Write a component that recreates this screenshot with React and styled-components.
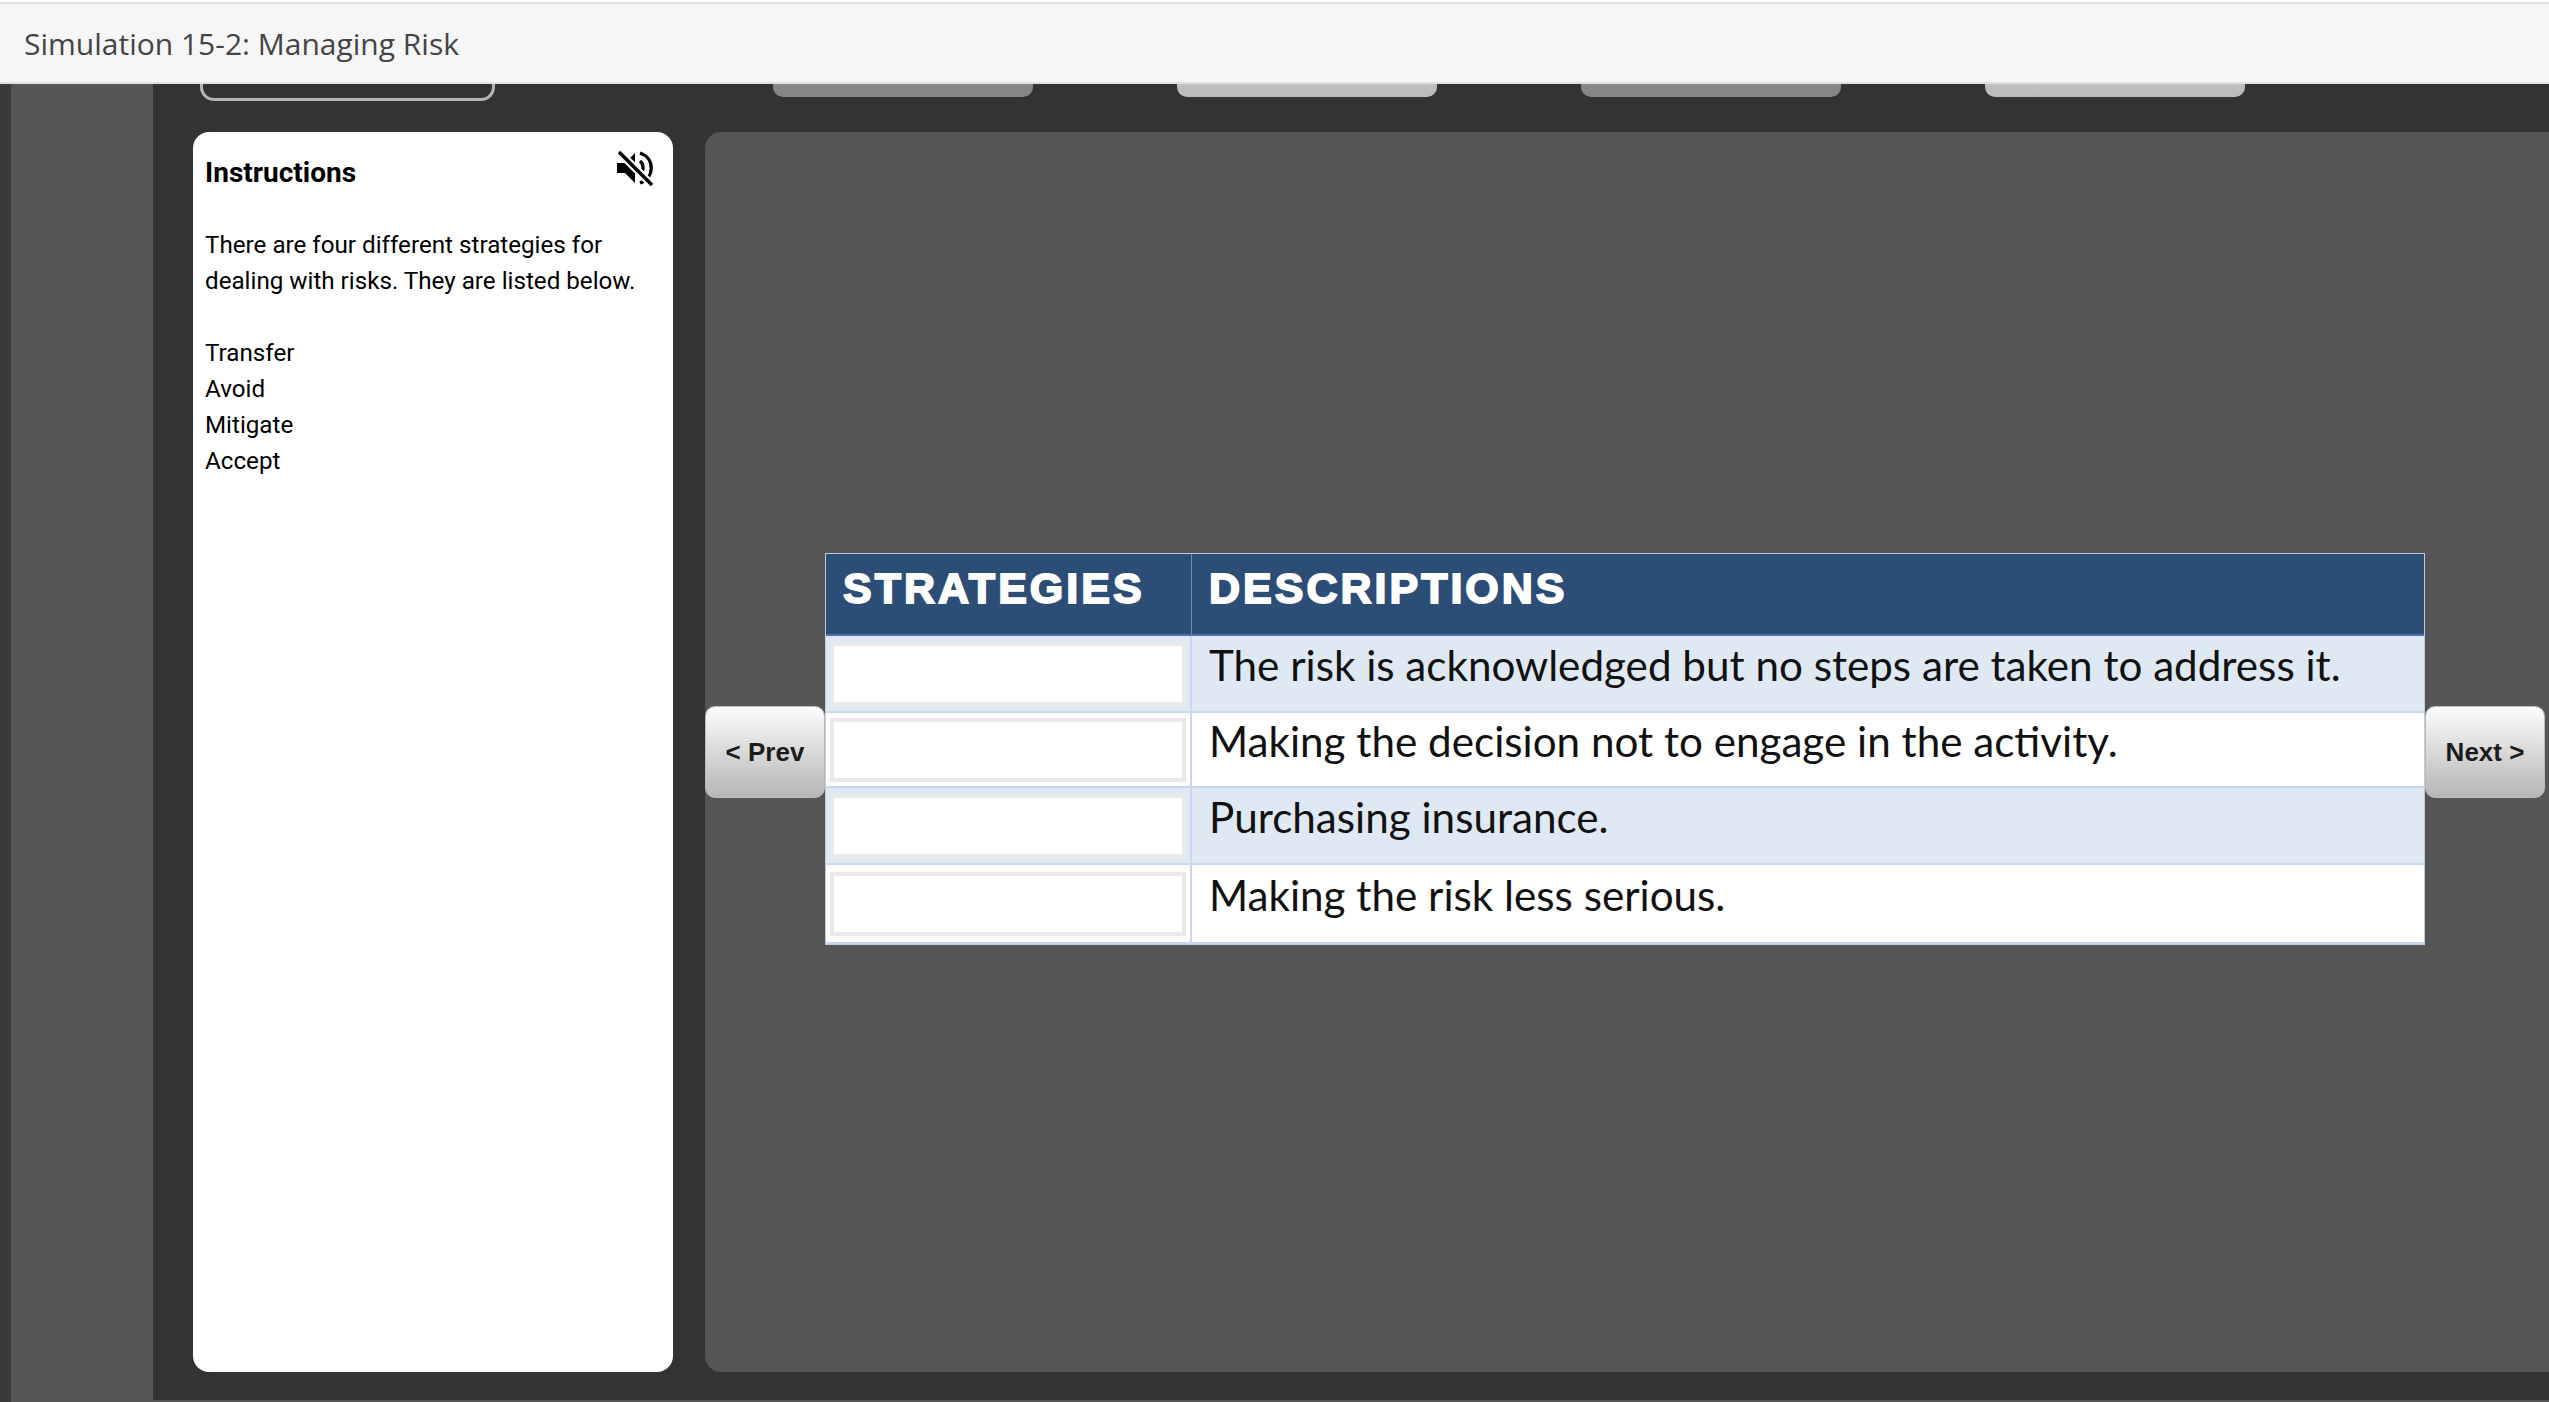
import React from 'react';
import styled, {createGlobalStyle} from 'styled-components';

const GlobalStyle = createGlobalStyle`
    html, body{
        margin:0;
        padding:0;
        height:100%;
        overflow:hidden;
        background:#555;
    }
    #root{
        height:100%;
    }
`

const Page = styled.div`
    display:flex;
    flex-direction:column;
    height:1402px;
    background:#fff;
`
const TitleBar = styled.header`
    flex:none;
    box-sizing:border-box;
    height:82px;
    margin-top:2px;
    padding-left:24px;
    display:flex;
    align-items:center;
    position:relative;
    z-index:2;
    background:#f6f6f6;
    border-top:2px solid #e0e0e0;
    border-bottom:2px solid #e0e0e0;
    font-family:"Open Sans", sans-serif;
    font-size:30px;
    color:#444;
`
const Body = styled.div`
    flex:1;
    display:flex;
    min-height:0;
    overflow:hidden;
    background:#3a3a3a;
`
const Shell = styled.div`
    flex:1;
    display:flex;
    min-width:0;
    margin-left:11px;
    background:#555;
`
const Rail = styled.div`
    flex:none;
    width:142px;
`
const Stage = styled.div`
    flex:1;
    display:flex;
    flex-direction:column;
    min-width:0;
    height:1316px;
    background:#333;
`
const TabRow = styled.div`
    flex:none;
    display:flex;
    height:48px;
    margin-top:-32px;
`
const LabButton = styled.div`
    box-sizing:border-box;
    width:295px;
    height:49px;
    margin-left:47px;
    border:3px solid #b4b4b4;
    border-radius:14px;
    text-align:center;
    font:bold 36px/34px "Liberation Sans", sans-serif;
    color:#ccc;
`
const Tabs = styled.div`
    display:flex;
    gap:144px;
    margin-left:278px;
`
const Tab = styled.div`
    width:260px;
    height:45px;
    border-radius:0 0 10px 10px;
    background:${props => props.$light ? 'linear-gradient(#cbcbcb,#bbb)' : 'linear-gradient(#8f8f8f,#858585)'};
`
const Content = styled.div`
    flex:1;
    display:flex;
    gap:32px;
    min-height:0;
    margin-top:32px;
    padding:0 0 28px 40px;
`
const Instructions = styled.aside`
    flex:none;
    box-sizing:border-box;
    width:480px;
    padding:12px;
    border-radius:16px;
    background:#fff;
    font-family:Roboto, sans-serif;
    font-size:24.2px;
    line-height:36px;
    color:#000;
`
const InstructionsHead = styled.div`
    display:flex;
    justify-content:space-between;
    align-items:flex-start;
    height:83px;
`
const InstructionsTitle = styled.h2`
    margin:11px 0 0;
    font-size:28px;
    line-height:36px;
    font-weight:700;
`
const Paragraph = styled.p`
    margin:0 0 36px;
`
const Term = styled.div``
const MuteSvg = styled.svg`
    flex:none;
    margin:6px 5px 0 0;
`
const MainPanel = styled.main`
    flex:1;
    min-width:0;
    display:flex;
    align-items:center;
    margin-right:-20px;
    border-radius:16px;
    background:#555;
`
const Activity = styled.div`
    display:flex;
    align-items:center;
`
const NavButton = styled.button`
    box-sizing:border-box;
    width:120px;
    height:92px;
    padding:0;
    border:1px solid #bbb;
    border-radius:10px;
    background:linear-gradient(#fcfcfc,#b6b6b6);
    font:bold 26px "Liberation Sans", sans-serif;
    color:#1c1c1c;
`
const RiskTable = styled.div`
    box-sizing:border-box;
    width:1600px;
    margin-bottom:6px;
    display:grid;
    grid-template-columns:366px 1fr;
    grid-template-rows:82px 77px 75px 77px 79px;
    border:1px solid #b9cde5;
    background:#fff;
`
const HeadCell = styled.div`
    box-sizing:border-box;
    padding:0 0 12px 17px;
    display:flex;
    align-items:center;
    background:#2c4d75;
    border-bottom:2px solid #4a74a8;
    border-right:${props => props.$first ? '1px solid #6d8bb0' : 'none'};
    font:bold 43px "Liberation Sans", sans-serif;
    letter-spacing:3px;
    -webkit-text-stroke:1.8px #fff;
    color:#fff;
`
const SlotCell = styled.div`
    box-sizing:border-box;
    display:flex;
    align-items:center;
    padding:0 4px;
    background:${props => props.$shaded ? '#dfe9f4' : '#fff'};
    border-bottom:2px solid #c8d8ec;
    border-right:2px solid #c8d8ec;
`
const DropSlot = styled.div`
    box-sizing:border-box;
    width:100%;
    height:64px;
    background:#fff;
    border:4px solid #e9e9e9;
`
const TextCell = styled.div`
    box-sizing:border-box;
    padding:0 0 18px 17px;
    display:flex;
    align-items:center;
    background:${props => props.$shaded ? '#dfe9f4' : '#fff'};
    border-bottom:2px solid #c8d8ec;
    font-family:Lato, sans-serif;
    font-size:42.2px;
    color:#111;
`

const MuteIcon = () => (
    <MuteSvg width="40" height="40" viewBox="0 0 40 40" aria-hidden="true">
        <path d="M1 13h8l10-10v30L9 23H1z" fill="#000"/>
        <path d="M24 3c15 5 15 25 0 30" fill="none" stroke="#000" strokeWidth="3.4"/>
        <path d="M24 11c4 3 4 10 0 13" fill="none" stroke="#000" strokeWidth="3.4"/>
        <path d="M3 2l33 33" stroke="#fff" strokeWidth="8"/>
        <path d="M3 2l33 33" stroke="#000" strokeWidth="3.6"/>
    </MuteSvg>
)

const rows = [
    'The risk is acknowledged but no steps are taken to address it.',
    'Making the decision not to engage in the activity.',
    'Purchasing insurance.',
    'Making the risk less serious.',
]

export default function App(){
    return(
        <Page>
            <GlobalStyle/>
            <TitleBar>Simulation 15-2: Managing Risk</TitleBar>
            <Body>
                <Shell>
                    <Rail/>
                    <Stage>
                        <TabRow>
                            <LabButton>Lab Connection</LabButton>
                            <Tabs>
                                <Tab/>
                                <Tab $light/>
                                <Tab/>
                                <Tab $light/>
                            </Tabs>
                        </TabRow>
                        <Content>
                            <Instructions>
                                <InstructionsHead>
                                    <InstructionsTitle>Instructions</InstructionsTitle>
                                    <MuteIcon/>
                                </InstructionsHead>
                                <Paragraph>There are four different strategies for dealing with risks. They are listed below.</Paragraph>
                                <Term>Transfer</Term>
                                <Term>Avoid</Term>
                                <Term>Mitigate</Term>
                                <Term>Accept</Term>
                            </Instructions>
                            <MainPanel>
                                <Activity>
                                    <NavButton>&lt; Prev</NavButton>
                                    <RiskTable>
                                        <HeadCell $first>STRATEGIES</HeadCell>
                                        <HeadCell>DESCRIPTIONS</HeadCell>
                                        {rows.map((text,i) => (
                                            <React.Fragment key={text}>
                                                <SlotCell $shaded={i % 2 === 0}><DropSlot/></SlotCell>
                                                <TextCell $shaded={i % 2 === 0}>{text}</TextCell>
                                            </React.Fragment>
                                        ))}
                                    </RiskTable>
                                    <NavButton>Next &gt;</NavButton>
                                </Activity>
                            </MainPanel>
                        </Content>
                    </Stage>
                </Shell>
            </Body>
        </Page>
    )
}
